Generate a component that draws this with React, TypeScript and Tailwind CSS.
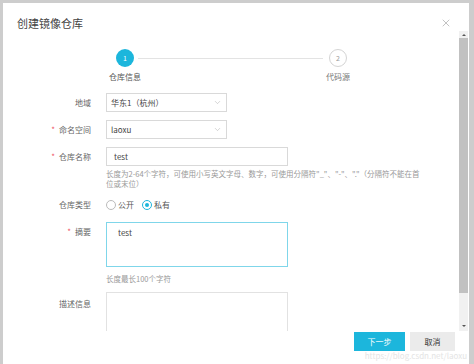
import React from "react";
import { X, ChevronDown } from "lucide-react";

const Label: React.FC<{ text: string; required?: boolean; className?: string }> = ({
  text,
  required,
  className = "",
}) => (
  <div className={`w-[88px] shrink-0 text-right text-[8px] leading-[12px] text-[#666] ${className}`}>
    {required && <span className="text-[#ee5566] mr-[4px]">*</span>}
    {text}
  </div>
);

const Select: React.FC<{ value: string }> = ({ value }) => (
  <div className="w-[121px] h-[19px] border border-[#d9d9d9] flex items-center justify-between pl-[4px] pr-[4px] text-[8px] text-[#444]">
    <span>{value}</span>
    <ChevronDown size={9} strokeWidth={1.3} color="#aaa" />
  </div>
);

export default function App() {
  return (
    <div className="w-[474px] h-[364px] bg-[#cdcdcd] pt-[3px] pl-[3px] pr-[5px] flex font-['Noto_Sans_CJK_SC','Liberation_Sans',sans-serif]">
      <div className="relative flex-1 bg-white flex flex-col overflow-hidden">
        {/* header */}
        <div className="h-[28px] shrink-0 flex items-start justify-between pl-[14px] pr-[17px]">
          <div className="pt-[14px] text-[11px] leading-[12px] text-[#444]">创建镜像仓库</div>
          <X size={12} strokeWidth={1.2} color="#999" className="mt-[14px]" />
        </div>

        {/* body */}
        <div className="h-[300px] shrink-0 flex overflow-hidden">
          <div className="flex-1 overflow-hidden">
            {/* steps */}
            <div className="mt-[18px] flex items-center pl-[113px]">
              <div className="w-[18px] h-[18px] rounded-full bg-[#1cb6dc] flex items-center justify-center text-white text-[7px] leading-none">
                1
              </div>
              <div className="ml-[4px] w-[185px] h-px bg-[#e3e3e3]" />
              <div className="ml-[6px] w-[18px] h-[18px] rounded-full border border-[#d4d4d4] flex items-center justify-center text-[#999] text-[7px] leading-none">
                2
              </div>
            </div>
            <div className="mt-[4px] flex text-[8px] leading-[12px] text-[#555]">
              <div className="ml-[92px] w-[60px] text-center">仓库信息</div>
              <div className="ml-[153px] w-[60px] text-center text-[#777]">代码源</div>
            </div>

            {/* form */}
            <div className="mt-[10px] flex items-center gap-[15px]">
              <Label text="地域" />
              <Select value="华东1（杭州）" />
            </div>
            <div className="mt-[8px] flex items-center gap-[15px]">
              <Label text="命名空间" required />
              <Select value="laoxu" />
            </div>
            <div className="mt-[8px] flex items-center gap-[15px]">
              <Label text="仓库名称" required />
              <div className="w-[182px] h-[19px] border border-[#d9d9d9] flex items-center pl-[7px] text-[8px] text-[#444]">
                test
              </div>
            </div>
            <div className="mt-[3px] ml-[103px] text-[7.5px] leading-[10px] text-[#999] whitespace-nowrap">
              长度为2-64个字符，可使用小写英文字母、数字，可使用分隔符"_"、"-"、"."（分隔符不能在首
              <br />
              位或末位）
            </div>
            <div className="mt-[9px] h-[14px] flex items-center gap-[15px]">
              <Label text="仓库类型" />
              <div className="flex items-center text-[8px] text-[#555]">
                <span className="w-[10px] h-[10px] rounded-full border border-[#bbb]" />
                <span className="ml-[2px]">公开</span>
                <span className="ml-[8px] w-[10px] h-[10px] rounded-full border border-[#1cb6dc] flex items-center justify-center">
                  <span className="w-[4px] h-[4px] rounded-full bg-[#1cb6dc]" />
                </span>
                <span className="ml-[2px]">私有</span>
              </div>
            </div>
            <div className="mt-[10px] flex items-start gap-[15px]">
              <Label text="摘要" required className="pt-[4px]" />
              <div className="w-[182px] h-[45px] border border-[#7fd6ea] pl-[11px] pt-[4px] text-[8px] leading-[12px] text-[#444]">
                test
              </div>
            </div>
            <div className="mt-[7px] ml-[103px] text-[7.5px] leading-[10px] text-[#999]">长度最长100个字符</div>
            <div className="mt-[8px] flex items-start gap-[15px]">
              <Label text="描述信息" className="pt-[6px]" />
              <div className="w-[182px] h-[60px] border border-[#e2e2e2]" />
            </div>
          </div>

          {/* scrollbar */}
          <div className="w-[9px] mr-[1px] flex flex-col bg-[#f1f1f1]">
            <div className="h-[7px] flex items-center justify-center">
              <span className="w-0 h-0 border-l-[2px] border-r-[2px] border-b-[2px] border-l-transparent border-r-transparent border-b-[#555]" />
            </div>
            <div className="h-[255px] bg-[#c1c1c1]" />
            <div className="flex-1" />
            <div className="h-[10px] flex items-center justify-center">
              <span className="w-0 h-0 border-l-[2px] border-r-[2px] border-t-[2px] border-l-transparent border-r-transparent border-t-[#555]" />
            </div>
          </div>
        </div>

        {/* footer */}
        <div className="flex-1 flex justify-end items-start pt-[1px] pr-[14px] gap-[5px]">
          <div className="w-[51px] h-[19px] bg-[#1cb6dc] text-white text-[8px] flex items-center justify-center">下一步</div>
          <div className="w-[45px] h-[19px] bg-[#ebebeb] text-[#333] text-[8px] flex items-center justify-center">取消</div>
        </div>
        <div className="absolute right-[2px] bottom-[3px] text-[8px] leading-[10px] text-[#e4e4e4] whitespace-nowrap">
          https://blog.csdn.net/laoxu
        </div>
      </div>
    </div>
  );
}
